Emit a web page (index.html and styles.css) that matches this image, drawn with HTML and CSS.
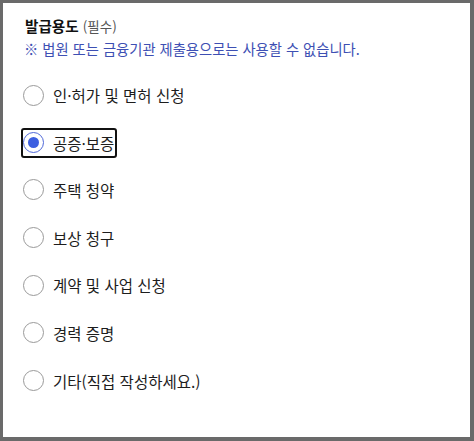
FILE: index.html
```html
<!DOCTYPE html>
<html lang="ko">
<head>
<meta charset="utf-8">
<link rel="stylesheet" href="styles.css">
</head>
<body>
<div class="frame">
  <fieldset class="group">
    <legend class="title">발급용도 <span class="req">(필수)</span></legend>
    <p class="notice">※ 법원 또는 금융기관 제출용으로는 사용할 수 없습니다.</p>
    <ul class="options">
      <li><label class="opt"><span class="radio"></span><span class="txt">인·허가 및 면허 신청</span></label></li>
      <li><label class="opt focus"><span class="radio on"></span><span class="txt">공증·보증</span></label></li>
      <li><label class="opt"><span class="radio"></span><span class="txt">주택 청약</span></label></li>
      <li><label class="opt"><span class="radio"></span><span class="txt">보상 청구</span></label></li>
      <li><label class="opt"><span class="radio"></span><span class="txt">계약 및 사업 신청</span></label></li>
      <li><label class="opt"><span class="radio"></span><span class="txt">경력 증명</span></label></li>
      <li><label class="opt"><span class="radio"></span><span class="txt">기타(직접 작성하세요.)</span></label></li>
    </ul>
  </fieldset>
</div>
</body>
</html>
```
FILE: styles.css
```css
html, body {
  margin: 0;
  padding: 0;
  background: #fff;
}
body {
  font-family: "Noto Sans CJK KR", "Noto Sans", sans-serif;
  color: #1a1a1a;
}
.frame {
  box-sizing: border-box;
  width: 474px;
  height: 441px;
  border-style: solid;
  border-color: #6a6a6a;
  border-width: 3px 4px 4px 3px;
  background: #fff;
  padding: 11px 0 0 18px;
}
.group {
  border: 0;
  margin: 0;
  padding: 0;
  min-width: 0;
}
.title {
  padding: 0 0 0 4px;
  font-size: 14.6px;
  font-weight: 700;
  line-height: 24px;
  color: #111;
  float: left;
  width: 100%;
}
.req {
  font-size: 13.5px;
  font-weight: 400;
  color: #555;
}
.notice {
  clear: both;
  margin: 0;
  padding: 1px 0 0 3px;
  font-size: 14.3px;
  line-height: 20px;
  color: #3d4fb3;
}
.options {
  list-style: none;
  margin: 0;
  padding: 21px 0 0 0;
  display: flex;
  flex-direction: column;
  gap: 17.2px;
}
.opt {
  display: inline-flex;
  align-items: center;
  gap: 9px;
  height: 30px;
  box-sizing: border-box;
  padding: 0 1px 0 0;
  border: 2px solid transparent;
  border-radius: 3px;
  font-size: 15.5px;
  color: #1d1d1d;
}
.opt.focus {
  border-color: #111;
}
.radio {
  box-sizing: border-box;
  width: 21px;
  height: 21px;
  border: 1px solid #9a9a9a;
  border-radius: 50%;
  background: #fff;
  display: flex;
  align-items: center;
  justify-content: center;
  flex: none;
}
.radio.on {
  border-color: #4f68d8;
}
.radio.on::after {
  content: "";
  width: 11px;
  height: 11px;
  border-radius: 50%;
  background: #3d5fe0;
}
.txt {
  line-height: 20px;
}
```
